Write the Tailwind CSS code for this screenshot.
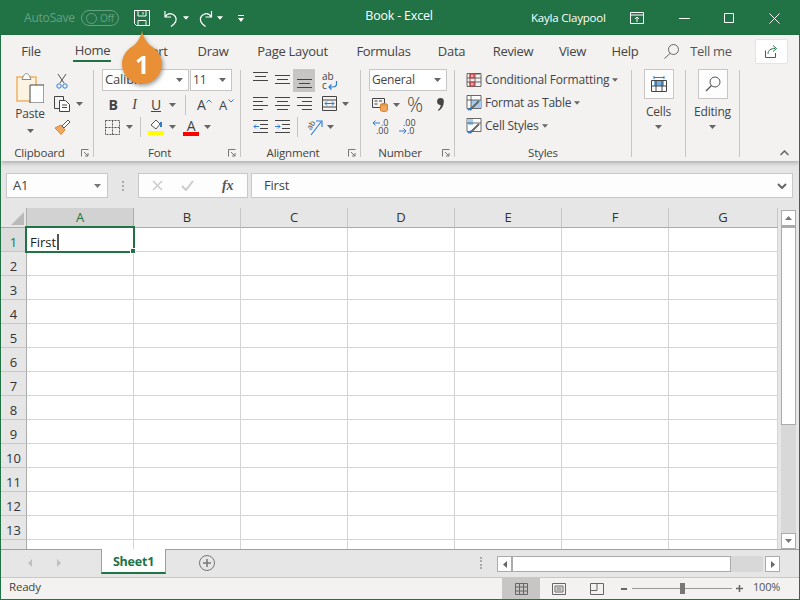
<!DOCTYPE html>
<html lang="en">
<head>
<meta charset="UTF-8">
<title>Book - Excel</title>
<script src="https://cdn.jsdelivr.net/npm/@tailwindcss/browser@4"></script>
</head>
<body class="font-['Open_Sans',sans-serif] text-[12px] tracking-[-0.2px] text-[#444] overflow-hidden">
<div class="relative w-[800px] h-[600px] border border-[#217346] flex flex-col bg-[#e6e6e6] overflow-hidden">

  <!-- Title bar -->
  <header class="h-[34px] bg-[#217346] flex items-center shrink-0 text-white">
    <span class="ml-[23px] w-[57px] text-[#64a183]">AutoSave</span>
    <span class="w-[38px] h-[16px] rounded-full border border-[#64a183] flex items-center pl-[4px] gap-[3px] text-[10px] text-[#64a183]"><span class="w-[11px] h-[11px] rounded-full border border-[#64a183]"></span>Off</span>
    <svg class="ml-[15px] w-[16px] h-[16px]" viewBox="0 0 16 16" fill="none" stroke="#fff"><path d="M.5.5h15v15H2.500l-2-2zM4 .5v5.500h8V.5M4 15.500V10.500h8v5M9 2v2.500"/></svg>
    <svg class="ml-[14px] w-[14px] h-[17px]" viewBox="0 0 14 17" fill="none" stroke="#fff" stroke-width="1.200"><path d="M1 1v6h6M1 7c2-3 5-4 8-2.500 4 2 4 7 1 9.500l-3 2.500"/></svg>
    <svg class="ml-[5px] w-[6px] h-[4px]" viewBox="0 0 7 4"><path d="M0 0h7L3.500 4z" fill="#fff"/></svg>
    <svg class="ml-[9px] w-[15px] h-[17px]" viewBox="0 0 14 17" fill="none" stroke="#fff" stroke-width="1.200"><path d="M13 1v6H7M13 7c-2-3-5-4-8-2.500-4 2-4 7-1 9.500l3 2.500"/></svg>
    <svg class="ml-[4px] w-[6px] h-[4px]" viewBox="0 0 7 4"><path d="M0 0h7L3.500 4z" fill="#fff"/></svg>
    <svg class="ml-[15px] w-[6px] h-[7px]" viewBox="0 0 6 7"><path d="M0 0h6v1H0zM0 3h6L3 7z" fill="#fff"/></svg>
    <span class="ml-[55px] w-[200px] -mt-[3px] text-center text-[12.500px] text-white">Book - Excel</span>
    <span class="ml-[32px] w-[74px] whitespace-nowrap text-[11.500px]">Kayla Claypool</span>
    <svg class="ml-[25px] w-[14px] h-[12px]" viewBox="0 0 14 12" fill="none" stroke="#fff"><path d="M.5.5h13v11H.5zM.5 3h13M7 10V5M5 7l2-2 2 2"/></svg>
    <svg class="ml-[35px] w-[11px] h-[11px]" viewBox="0 0 11 11" stroke="#fff"><path d="M0 5.500h11"/></svg>
    <svg class="ml-[34px] w-[10px] h-[10px]" viewBox="0 0 10 10" fill="none" stroke="#fff"><path d="M.5.500h9v9h-9z"/></svg>
    <svg class="ml-[35px] w-[11px] h-[11px]" viewBox="0 0 11 11" stroke="#fff"><path d="M.5.500l10 10M10.500.500l-10 10"/></svg>
  </header>

  <!-- Ribbon -->
  <div class="relative z-10 bg-[#f3f2f1] shadow-[0_2px_4px_rgba(0,0,0,0.25)] shrink-0">
    <nav class="h-[33px] flex items-center text-[13px] tracking-[-0.3px] text-center">
      <a class="w-[60px]">File</a>
      <a class="relative w-[63px] h-[33px] leading-[31px] font-medium">Home<span class="absolute left-[12px] top-[25px] w-[38px] h-[2px] bg-[#217346]"></span></a>
      <a class="w-[54px]">Insert</a>
      <a class="w-[70px]">Draw</a>
      <a class="w-[89px]">Page Layout</a>
      <a class="w-[93px]">Formulas</a>
      <a class="w-[43px]">Data</a>
      <a class="w-[80px]">Review</a>
      <a class="w-[39px]">View</a>
      <a class="w-[66px]">Help</a>
      <svg class="ml-[6px] w-[15px] h-[15px]" viewBox="0 0 15 15" fill="none" stroke="#666"><circle cx="9.500" cy="5.500" r="5"/><path d="M6 9.500L.5 14.500"/></svg>
      <a class="ml-[10px] w-[44px] whitespace-nowrap text-[#555]">Tell me</a>
      <span class="ml-[22px] w-[33px] h-[25px] bg-white rounded-[2px] border border-[#e4e4e4] flex items-center justify-center">
        <svg class="w-[14px] h-[13px]" viewBox="0 0 14 13" fill="none" stroke="#217346"><path d="M.5 5.500v7h10V8M3 9c0-4 3-5.500 7-5.500M8 .5l3.500 3L8 6.500"/></svg>
      </span>
    </nav>

    <div class="h-[93px] flex">
      <!-- Clipboard -->
      <section class="w-[92px] flex flex-col">
        <div class="flex h-[77px]">
          <div class="w-[50px] pl-[8px] flex flex-col items-center pt-[4px]">
            <svg class="w-[28px] h-[31px]" viewBox="0 0 28 31" fill="none"><path d="M1 5h19v24H1z" fill="#fdf3e3" stroke="#f0b060" stroke-width="1.500"/><path d="M7 5c0-2 2-2 3.500-4C12 3 14 3 14 5l1 2.500H6z" fill="#fff" stroke="#888"/><path d="M14 13h14v18H14z" fill="#fff" stroke="#444"/></svg>
            <span class="mt-[3px] leading-[16px]">Paste</span>
            <svg class="mt-[7px] w-[7px] h-[4px]" viewBox="0 0 7 4"><path d="M0 0h7L3.500 4z" fill="#666"/></svg>
          </div>
          <div class="pt-[1px] flex flex-col">
            <span class="h-[23px] flex items-center pl-[5px]">
              <svg class="w-[12px] h-[16px]" viewBox="0 0 12 16" fill="none"><path d="M2 1l6 9M10 1l-6 9" stroke="#555"/><circle cx="3" cy="13" r="2.200" stroke="#2b7cd3"/><circle cx="9" cy="13" r="2.200" stroke="#2b7cd3"/></svg>
            </span>
            <span class="h-[23px] flex items-center pl-[3px] gap-[5px]">
              <svg class="w-[17px] h-[16px]" viewBox="0 0 17 16" fill="none" stroke="#444"><path d="M.5.500h9v12h-9z" fill="#f3f2f1"/><path d="M5.500 4.500h6l4 4v7h-10z" fill="#fff"/><path d="M8 9h5M8 11.500h5"/></svg>
              <svg class="w-[7px] h-[4px]" viewBox="0 0 7 4"><path d="M0 0h7L3.500 4z" fill="#666"/></svg>
            </span>
            <span class="h-[23px] flex items-center pl-[3px]">
              <svg class="w-[17px] h-[16px]" viewBox="0 0 17 16" fill="none"><path d="M1 9l6-3 4 5-4 4.500C5 13 3 11 1 9z" fill="#f0a860" stroke="#d9822b"/><path d="M8 7l6-6 2 2-6 6z" fill="#fff" stroke="#555"/></svg>
            </span>
          </div>
        </div>
        <div class="h-[16px] flex items-center"><span class="w-[77px] text-center text-[11.500px]">Clipboard</span><svg class="ml-[3px] w-[8px] h-[8px]" viewBox="0 0 8 8" fill="none" stroke="#777"><path d="M.5 7.500V.5h7M3 3l4 4M7 4v3H4"/></svg></div>
      </section>
      <div class="w-px h-[87px] mt-[2px] bg-[#c8c6c4]"></div>

      <!-- Font -->
      <section class="w-[146px] flex flex-col">
        <div class="h-[77px] pt-[1px] pl-[8px]">
          <div class="h-[22px] flex">
            <span class="w-[87px] h-[22px] bg-white border border-[#c8c6c4] flex items-center pl-[2px] text-[13px]"><span class="flex-1">Calibri</span><svg class="mr-[5px] w-[7px] h-[4px]" viewBox="0 0 7 4"><path d="M0 0h7L3.500 4z" fill="#666"/></svg></span>
            <span class="ml-px w-[42px] h-[22px] bg-white border border-[#c8c6c4] flex items-center pl-[2px]"><span class="flex-1">11</span><svg class="mr-[5px] w-[7px] h-[4px]" viewBox="0 0 7 4"><path d="M0 0h7L3.500 4z" fill="#666"/></svg></span>
          </div>
          <div class="h-[25px] pt-[2px] flex items-center">
            <span class="w-[22px] text-center font-bold text-[14px]">B</span>
            <span class="w-[21px] text-center italic text-[14px] font-['Liberation_Serif']">I</span>
            <span class="w-[22px] text-center underline text-[14px]">U</span>
            <svg class="ml-[2px] w-[7px] h-[4px]" viewBox="0 0 7 4"><path d="M0 0h7L3.500 4z" fill="#666"/></svg>
            <span class="ml-[9px] w-px h-[20px] bg-[#c8c6c4]"></span>
            <span class="ml-[11px] w-[9px] text-[14px] leading-[14px]">A</span>
            <svg class="w-[6px] h-[4px] -mt-[8px]" viewBox="0 0 6 4" fill="none" stroke="#2b7cd3"><path d="M.5 3.500L3 1l2.500 2.500"/></svg>
            <span class="ml-[7px] w-[9px] text-[13px] leading-[14px]">A</span>
            <svg class="w-[6px] h-[4px] -mt-[8px]" viewBox="0 0 6 4" fill="none" stroke="#2b7cd3"><path d="M.5.5L3 3l2.500-2.500"/></svg>
          </div>
          <div class="h-[22px] flex items-center">
            <svg class="ml-[3px] w-[15px] h-[15px]" viewBox="0 0 15 15" fill="none" stroke="#555" stroke-dasharray="2 1"><path d="M.5.5h14v14H.5zM7.500.5v14M.5 7.500h14"/></svg>
            <svg class="ml-[6px] w-[7px] h-[4px]" viewBox="0 0 7 4"><path d="M0 0h7L3.500 4z" fill="#666"/></svg>
            <span class="ml-[7px] w-px h-[20px] bg-[#c8c6c4]"></span>
            <span class="ml-[7px] w-[16px] flex flex-col items-center">
              <svg class="w-[13px] h-[11px]" viewBox="0 0 13 11" fill="none"><path d="M1 6l5-5 4 4-4 5z" fill="#fff" stroke="#555"/><path d="M11 3v5" stroke="#2b7cd3" stroke-width="2"/></svg>
              <span class="mt-[1px] w-[16px] h-[4px] bg-[#ffff00]"></span>
            </span>
            <svg class="ml-[5px] w-[7px] h-[4px]" viewBox="0 0 7 4"><path d="M0 0h7L3.500 4z" fill="#666"/></svg>
            <span class="ml-[7px] w-[16px] flex flex-col items-center">
              <span class="h-[12px] leading-[13px] text-[14px]">A</span>
              <span class="mt-[1px] w-[16px] h-[4px] bg-[#ff0000]"></span>
            </span>
            <svg class="ml-[5px] w-[7px] h-[4px]" viewBox="0 0 7 4"><path d="M0 0h7L3.500 4z" fill="#666"/></svg>
          </div>
        </div>
        <div class="h-[16px] flex items-center"><span class="w-[131px] text-center text-[11.500px]">Font</span><svg class="ml-[3px] w-[8px] h-[8px]" viewBox="0 0 8 8" fill="none" stroke="#777"><path d="M.5 7.500V.5h7M3 3l4 4M7 4v3H4"/></svg></div>
      </section>
      <div class="w-px h-[87px] mt-[2px] bg-[#c8c6c4]"></div>

      <!-- Alignment -->
      <section class="w-[119px] flex flex-col">
        <div class="h-[77px] pt-[1px] pl-[12px]">
          <div class="h-[23px] flex">
            <svg class="w-[15px] h-[23px]" viewBox="0 0 15 23" stroke="#444"><path d="M0 3.500h15M2 7.500h11M0 11.500h15"/></svg>
            <svg class="ml-[7px] w-[15px] h-[23px]" viewBox="0 0 15 23" stroke="#444"><path d="M0 6.500h15M2 10.500h11M0 14.500h15"/></svg>
            <span class="ml-[3px] w-[22px] h-[23px] bg-[#c8c6c4] flex justify-center"><svg class="w-[15px] h-[23px]" viewBox="0 0 15 23" stroke="#444"><path d="M0 10.500h15M2 14.500h11M0 18.500h15"/></svg></span>
            <span class="relative ml-[7px] w-[16px] h-[22px] pt-[3px] flex flex-col text-[10px] leading-[9px] tracking-normal">
              <span class="h-[9px]">ab</span>
              <span class="h-[9px]">c</span>
              <svg class="absolute left-0 top-0 w-[16px] h-[22px]" viewBox="0 0 16 22" fill="none"><path d="M14.500 12v3c0 2-2 3-4 3H7M9.500 15.500L7 18l2.500 2.500" stroke="#2b7cd3" stroke-width="1.200"/></svg>
            </span>
          </div>
          <div class="h-[23px] flex items-center">
            <svg class="w-[15px] h-[14px]" viewBox="0 0 15 14" stroke="#444"><path d="M0 .5h15M0 4.500h10M0 8.500h15M0 12.500h10"/></svg>
            <svg class="ml-[7px] w-[15px] h-[14px]" viewBox="0 0 15 14" stroke="#444"><path d="M0 .5h15M2 4.500h11M0 8.500h15M2 12.500h11"/></svg>
            <svg class="ml-[7px] w-[15px] h-[14px]" viewBox="0 0 15 14" stroke="#444"><path d="M0 .5h15M5 4.500h10M0 8.500h15M5 12.500h10"/></svg>
            <svg class="ml-[10px] w-[15px] h-[15px]" viewBox="0 0 15 15" fill="none"><path d="M.5.5h14v14H.5zM.5 4h14M.5 11h14" stroke="#444"/><path d="M3 7.500h9M5 5.500l-2 2 2 2M10 5.500l2 2-2 2" stroke="#2b7cd3"/></svg>
            <svg class="ml-[5px] w-[7px] h-[4px]" viewBox="0 0 7 4"><path d="M0 0h7L3.500 4z" fill="#666"/></svg>
          </div>
          <div class="h-[23px] flex items-center">
            <svg class="w-[15px] h-[14px]" viewBox="0 0 15 14" fill="none"><path d="M0 .5h15M7 4.500h8M7 8.500h8M0 12.500h15" stroke="#444"/><path d="M1 6.500h5M3 4.500l-2 2 2 2" stroke="#2b7cd3"/></svg>
            <svg class="ml-[7px] w-[15px] h-[14px]" viewBox="0 0 15 14" fill="none"><path d="M0 .5h15M7 4.500h8M7 8.500h8M0 12.500h15" stroke="#444"/><path d="M0 6.500h5M3 4.500l2 2-2 2" stroke="#2b7cd3"/></svg>
            <span class="ml-[7px] w-px h-[20px] bg-[#c8c6c4]"></span>
            <span class="relative ml-[8px] w-[17px] h-[18px] text-[8px] leading-[10px] tracking-normal">
              <span class="absolute left-0 top-[2px] -rotate-[60deg]">ab</span>
              <svg class="absolute left-0 top-0 w-[17px] h-[18px]" viewBox="0 0 17 18" fill="none"><path d="M5 17L15 4M10 3h6v6" stroke="#2b7cd3" stroke-width="1.100"/></svg>
            </span>
            <svg class="ml-[4px] w-[7px] h-[4px]" viewBox="0 0 7 4"><path d="M0 0h7L3.500 4z" fill="#666"/></svg>
          </div>
        </div>
        <div class="h-[16px] flex items-center"><span class="w-[104px] text-center text-[11.500px]">Alignment</span><svg class="ml-[3px] w-[8px] h-[8px]" viewBox="0 0 8 8" fill="none" stroke="#777"><path d="M.5 7.500V.5h7M3 3l4 4M7 4v3H4"/></svg></div>
      </section>
      <div class="w-px h-[87px] mt-[2px] bg-[#c8c6c4]"></div>

      <!-- Number -->
      <section class="w-[93px] flex flex-col">
        <div class="h-[77px] pt-[1px] pl-[8px]">
          <span class="w-[78px] h-[22px] bg-white border border-[#c8c6c4] flex items-center pl-[2px]"><span class="flex-1">General</span><svg class="mr-[5px] w-[7px] h-[4px]" viewBox="0 0 7 4"><path d="M0 0h7L3.500 4z" fill="#666"/></svg></span>
          <div class="h-[25px] pt-[2px] flex items-center">
            <svg class="ml-[3px] w-[16px] h-[15px]" viewBox="0 0 16 15" fill="none"><path d="M.5 1.500h12v9H.5z" stroke="#444"/><path d="M2.500 4h3M2.500 7h3M7 4h3" stroke="#444"/><ellipse cx="12" cy="8" rx="3.500" ry="1.500" fill="#f0a860" stroke="#d9822b"/><path d="M8.500 8v5c0 2 7 2 7 0V8z" fill="#f0a860" stroke="#d9822b"/></svg>
            <svg class="ml-[5px] w-[7px] h-[4px]" viewBox="0 0 7 4"><path d="M0 0h7L3.500 4z" fill="#666"/></svg>
            <span class="ml-[7px] w-[19px] text-[20px] leading-[20px] tracking-normal font-light">%</span>
            <svg class="ml-[11px] w-[7px] h-[13px]" viewBox="0 0 7 13"><path d="M3.500 0a3.300 3.300 0 0 1 3.300 3.500C6.800 7.500 5 11 1.500 13L1 12c1.800-1.500 2.600-3 2.700-5A3.300 3.300 0 0 1 3.500 0z" fill="#444"/></svg>
          </div>
          <div class="h-[22px] flex items-center">
            <span class="ml-[3px] w-[20px] flex flex-col text-[9px] leading-[8px] tracking-normal">
              <span class="h-[8px] flex"><svg class="w-[9px] h-[8px]" viewBox="0 0 9 8" fill="none"><path d="M1 4h7M3.500 1.500L1 4l2.500 2.500" stroke="#2b7cd3"/></svg><span>.0</span></span>
              <span class="h-[8px] pl-[4px]">.00</span>
            </span>
            <span class="ml-[6px] w-[20px] flex flex-col text-[9px] leading-[8px] tracking-normal">
              <span class="h-[8px] pl-[5px]">.00</span>
              <span class="h-[8px] flex"><svg class="w-[9px] h-[8px]" viewBox="0 0 9 8" fill="none"><path d="M1 4h7M5.500 1.500L8 4 5.500 6.500" stroke="#2b7cd3"/></svg><span>.0</span></span>
            </span>
          </div>
        </div>
        <div class="h-[16px] flex items-center"><span class="w-[78px] text-center text-[11.500px]">Number</span><svg class="ml-[3px] w-[8px] h-[8px]" viewBox="0 0 8 8" fill="none" stroke="#777"><path d="M.5 7.500V.5h7M3 3l4 4M7 4v3H4"/></svg></div>
      </section>
      <div class="w-px h-[87px] mt-[2px] bg-[#c8c6c4]"></div>

      <!-- Styles -->
      <section class="w-[176px] flex flex-col">
        <div class="h-[77px] pl-[11px]">
          <div class="h-[23px] flex items-center gap-[3px]">
            <svg class="w-[16px] h-[14px]" viewBox="0 0 16 14" fill="none"><path d="M4 1h5v4H4zM4 9h5v4H4z" fill="#f4a6a6"/><path d="M4 1v12M9 1h5M1 .5h14v13H1zM1 5h14M1 9h14M9 1v12" stroke="#444" stroke-width=".8"/><path d="M4 1h4v4H4zM4 9h4v4H4z" stroke="#d13438"/></svg>
            <span class="whitespace-nowrap">Conditional Formatting</span>
            <svg class="w-[6px] h-[4px]" viewBox="0 0 7 4"><path d="M0 0h7L3.500 4z" fill="#666"/></svg>
          </div>
          <div class="h-[23px] flex items-center gap-[3px]">
            <svg class="w-[16px] h-[16px]" viewBox="0 0 16 16" fill="none"><path d="M1 .5h14v13H1z" fill="#fff" stroke="#444" stroke-width=".8"/><path d="M5 5h10v8H5z" fill="#a6cdf0"/><path d="M1 5h14M5 1v12" stroke="#444" stroke-width=".8"/><path d="M4 15l9-9" stroke="#666" stroke-width="2"/><path d="M2 15l3-2" stroke="#2b7cd3" stroke-width="2"/></svg>
            <span class="whitespace-nowrap">Format as Table</span>
            <svg class="w-[6px] h-[4px]" viewBox="0 0 7 4"><path d="M0 0h7L3.500 4z" fill="#666"/></svg>
          </div>
          <div class="h-[23px] flex items-center gap-[3px]">
            <svg class="w-[16px] h-[16px]" viewBox="0 0 16 16" fill="none"><path d="M1 .5h14v13H1z" fill="#fff" stroke="#444" stroke-width=".8"/><path d="M1 1h6v6H1z" fill="#a6cdf0"/><path d="M1 5h14" stroke="#444" stroke-width=".8"/><path d="M4 15l9-9" stroke="#666" stroke-width="2"/><path d="M2 15l3-2" stroke="#2b7cd3" stroke-width="2"/></svg>
            <span class="whitespace-nowrap">Cell Styles</span>
            <svg class="w-[6px] h-[4px]" viewBox="0 0 7 4"><path d="M0 0h7L3.500 4z" fill="#666"/></svg>
          </div>
        </div>
        <div class="h-[16px] mt-auto flex items-center justify-center text-[11.500px]">Styles</div>
      </section>
      <div class="w-px h-[87px] mt-[2px] bg-[#c8c6c4]"></div>

      <!-- Cells -->
      <section class="w-[53px] pt-[1px] flex flex-col items-center">
        <span class="w-[30px] h-[30px] bg-[#fdfdfd] border border-[#c8c6c4] flex items-center justify-center">
          <svg class="w-[16px] h-[16px]" viewBox="0 0 16 16" fill="none"><path d="M3 5h10v5H3z" fill="#6fb0e6"/><path d="M.5 4.500h15v11H.5zM.5 10h15M5 4.500v11M11 4.500v11" stroke="#444"/><path d="M3 1.500h10M3 0v3M13 0v3" stroke="#2b7cd3"/></svg>
        </span>
        <span class="mt-[4px] leading-[17px]">Cells</span>
        <svg class="mt-[5px] w-[7px] h-[4px]" viewBox="0 0 7 4"><path d="M0 0h7L3.500 4z" fill="#666"/></svg>
      </section>
      <div class="w-px h-[87px] mt-[2px] bg-[#c8c6c4]"></div>

      <!-- Editing -->
      <section class="w-[53px] pt-[1px] flex flex-col items-center">
        <span class="w-[30px] h-[30px] bg-[#fdfdfd] border border-[#c8c6c4] flex items-center justify-center">
          <svg class="w-[16px] h-[16px]" viewBox="0 0 16 16" fill="none" stroke="#555"><circle cx="10" cy="6" r="5"/><path d="M6.500 9.500L1 15" stroke-width="1.300"/></svg>
        </span>
        <span class="mt-[4px] leading-[17px]">Editing</span>
        <svg class="mt-[5px] w-[7px] h-[4px]" viewBox="0 0 7 4"><path d="M0 0h7L3.500 4z" fill="#666"/></svg>
      </section>
      <div class="w-px h-[87px] mt-[2px] bg-[#c8c6c4]"></div>

      <svg class="ml-[40px] mt-[82px] w-[9px] h-[6px]" viewBox="0 0 9 6" fill="none" stroke="#666" stroke-width="1.500"><path d="M.5 5l4-4 4 4"/></svg>
    </div>
  </div>

  <!-- Formula bar -->
  <div class="h-[47px] pt-[12px] pl-[5px] flex items-start shrink-0">
    <span class="w-[102px] h-[25px] bg-[#fdfdfd] border border-[#c8c8c8] flex items-center pl-[6px] text-[13px]"><span class="flex-1">A1</span><svg class="mr-[6px] w-[7px] h-[4px]" viewBox="0 0 7 4"><path d="M0 0h7L3.500 4z" fill="#777"/></svg></span>
    <span class="ml-[14px] mt-[8px] w-[2px] h-[10px] border-l-2 border-dotted border-[#aaa]"></span>
    <span class="ml-[14px] w-[110px] h-[25px] bg-[#fdfdfd] border border-[#c8c8c8] flex items-center">
      <svg class="ml-[13px] w-[11px] h-[11px]" viewBox="0 0 11 11" fill="none" stroke="#ccc" stroke-width="1.500"><path d="M1 1l9 9M10 1l-9 9"/></svg>
      <svg class="ml-[18px] w-[13px] h-[11px]" viewBox="0 0 13 11" fill="none" stroke="#ccc" stroke-width="2"><path d="M1 6l4 4 7-9"/></svg>
      <span class="ml-[28px] italic font-bold text-[14px] text-[#555] font-['Liberation_Serif']">fx</span>
    </span>
    <span class="ml-[3px] w-[542px] h-[25px] bg-[#fdfdfd] border border-[#c8c8c8] flex items-center pl-[12px] text-[13px]"><span class="flex-1">First</span><svg class="mr-[5px] w-[10px] h-[6px]" viewBox="0 0 10 6" fill="none" stroke="#666" stroke-width="2"><path d="M1 1l4 4 4-4"/></svg></span>
  </div>

  <!-- Worksheet -->
  <div class="h-[341px] flex shrink-0 overflow-hidden">
    <div id="sheet" class="relative w-[777px] h-[341px] overflow-hidden grid grid-cols-[26px_107px_107px_107px_107px_107px_107px_109px] grid-rows-[20px_repeat(14,24px)] bg-white text-[13px] tracking-normal text-[#333]"></div>
    <!-- Vertical scrollbar -->
    <div class="w-[21px] h-[341px] pl-[3px] pt-[2px] flex flex-col">
      <span class="w-[15px] h-[16px] bg-white border border-[#ababab] flex items-center justify-center"><svg class="w-[7px] h-[4px]" viewBox="0 0 7 4"><path d="M3.500 0L7 4H0z" fill="#777"/></svg></span>
      <span class="w-[15px] h-[199px] bg-white border border-[#ababab] border-t-2"></span>
      <span class="w-[15px] flex-1 bg-[#d8d8d8]"></span>
      <span class="w-[15px] h-[16px] bg-white border border-[#ababab] flex items-center justify-center"><svg class="w-[7px] h-[4px]" viewBox="0 0 7 4"><path d="M0 0h7L3.500 4z" fill="#777"/></svg></span>
    </div>
  </div>

  <!-- Sheet tabs and horizontal scrollbar -->
  <div class="h-[28px] border-t border-[#9f9f9f] flex items-start shrink-0">
    <svg class="ml-[27px] mt-[9px] w-[4px] h-[8px]" viewBox="0 0 4 8"><path d="M4 0v8L0 4z" fill="#c0c0c0"/></svg>
    <svg class="ml-[25px] mt-[9px] w-[4px] h-[8px]" viewBox="0 0 4 8"><path d="M0 0v8l4-4z" fill="#c0c0c0"/></svg>
    <span class="ml-[40px] -mt-px w-[65px] h-[25px] pt-[3px] bg-white border-x border-[#9f9f9f] border-b-2 border-b-[#217346] flex items-center justify-center font-bold text-[12.500px] text-[#217346]">Sheet1</span>
    <svg class="ml-[33px] mt-[5px] w-[16px] h-[16px]" viewBox="0 0 16 16" fill="none" stroke="#777"><circle cx="8" cy="8" r="7.500"/><path d="M4 8h8M8 4v8" stroke-width="1.500"/></svg>
    <span class="ml-[265px] mt-[7px] w-[3px] h-[12px] border-l-[2px] border-dotted border-[#aaa]"></span>
    <span class="ml-[14px] mt-[6px] w-[266px] h-[16px] bg-[#d8d8d8] flex">
      <span class="w-[15px] h-[16px] bg-white border border-[#ababab] flex items-center justify-center"><svg class="w-[4px] h-[7px]" viewBox="0 0 4 7"><path d="M4 0v7L0 3.500z" fill="#666"/></svg></span>
      <span class="w-[219px] h-[16px] bg-white border border-[#ababab]"></span>
    </span>
    <span class="ml-[2px] mt-[6px] w-[15px] h-[16px] bg-white border border-[#ababab] flex items-center justify-center"><svg class="w-[4px] h-[7px]" viewBox="0 0 4 7"><path d="M0 0v7l4-3.500z" fill="#666"/></svg></span>
  </div>

  <!-- Status bar -->
  <footer class="h-[22px] bg-[#f3f2f1] border-t border-[#c8c8c8] flex items-center shrink-0 text-[11.500px]">
    <span class="ml-[8px] w-[493px] pb-[3px]">Ready</span>
    <span class="w-[38px] h-[21px] bg-[#c8c6c4] flex items-center justify-center"><svg class="w-[13px] h-[12px]" viewBox="0 0 13 12" fill="none" stroke="#666"><path d="M.5.500h12v11H.5zM.5 4h12M.5 8h12M4.500.5v11M8.500.5v11"/></svg></span>
    <svg class="ml-[12px] w-[14px] h-[12px]" viewBox="0 0 14 12" fill="none" stroke="#666"><path d="M.5.500h13v11H.5zM3 3h8v6H3zM4.500 5h5M4.500 7h5"/></svg>
    <svg class="ml-[24px] w-[14px] h-[12px]" viewBox="0 0 14 12" fill="none" stroke="#666"><path d="M.5.500h13v11H.5zM.5 7.500h6.500V.5"/></svg>
    <span class="ml-[17px] w-[6px] h-[2px] bg-[#666]"></span>
    <span class="relative ml-[5px] w-[100px] h-px bg-[#999]"><span class="absolute left-[48px] -top-[5px] w-[5px] h-[11px] bg-[#777]"></span></span>
    <svg class="ml-[4px] w-[7px] h-[7px]" viewBox="0 0 7 7" stroke="#666" stroke-width="1.500"><path d="M0 3.500h7M3.500 0v7"/></svg>
    <span class="ml-[10px] pb-[3px] text-[#555] text-[11px]">100%</span>
  </footer>

  <!-- Step marker pointing at the save button -->
  <div class="absolute z-20 left-[119px] top-[30px] w-[44px] h-[54px] drop-shadow-[1px_2px_2px_rgba(0,0,0,0.4)]">
    <svg class="w-[44px] h-[54px]" viewBox="0 0 44 54"><path d="M22 0C23.500 7 27 12 31 15A20 20 0 1 1 13 15C17 12 20.500 7 22 0z" fill="#e98f36"/></svg>
    <span class="absolute inset-x-0 top-[16px] text-center font-bold text-white text-[25px] leading-[34px]">1</span>
  </div>
</div>

<script>
    // Build the worksheet cells
    const sheet = document.getElementById('sheet');
    const cols = ['A', 'B', 'C', 'D', 'E', 'F', 'G'];
    let html = '<div class="bg-[#e6e6e6] border-r border-b border-[#ababab] flex items-end justify-end p-[2px]"><svg class="w-[13px] h-[13px]" viewBox="0 0 13 13"><path d="M13 0v13H0z" fill="#b9b9b9"/></svg></div>';
    cols.forEach((c, i) => {
        const cls = i === 0
            ? 'bg-[#d2d2d2] border-r border-[#ababab] border-b border-b-[#217346] text-[#217346]'
            : 'bg-[#e6e6e6] border-r border-[#c6c6c6] border-b border-b-[#ababab]';
        html += `<div class="${cls} flex items-center justify-center">${c}</div>`;
    });
    for (let r = 1; r <= 14; r++) {
        const head = r === 1
            ? 'bg-[#dcdcdc] border-r border-r-[#217346] text-[#217346]'
            : 'bg-[#e6e6e6] border-r border-r-[#ababab]';
        html += `<div class="${head} border-b border-b-[#c6c6c6] pt-[6px] flex items-center justify-center">${r < 14 ? r : ''}</div>`;
        cols.forEach((c, i) => {
            const text = r === 1 && i === 0 ? 'First' : '';
            html += `<div class="border-r border-b border-[#d4d4d4] pl-[3px] leading-[29px] text-[#222]">${text}</div>`;
        });
    }
    // Active cell outline with fill handle
    html += '<div class="absolute left-[24px] top-[18px] w-[110px] h-[27px] border-2 border-[#217346]"><span class="absolute left-[30px] top-[6px] w-[1.500px] h-[16px] bg-[#555]"></span><span class="absolute -right-[3px] -bottom-[3px] w-[6px] h-[6px] bg-[#217346] border border-white"></span></div>';
    sheet.innerHTML = html;
</script>
</body>
</html>
